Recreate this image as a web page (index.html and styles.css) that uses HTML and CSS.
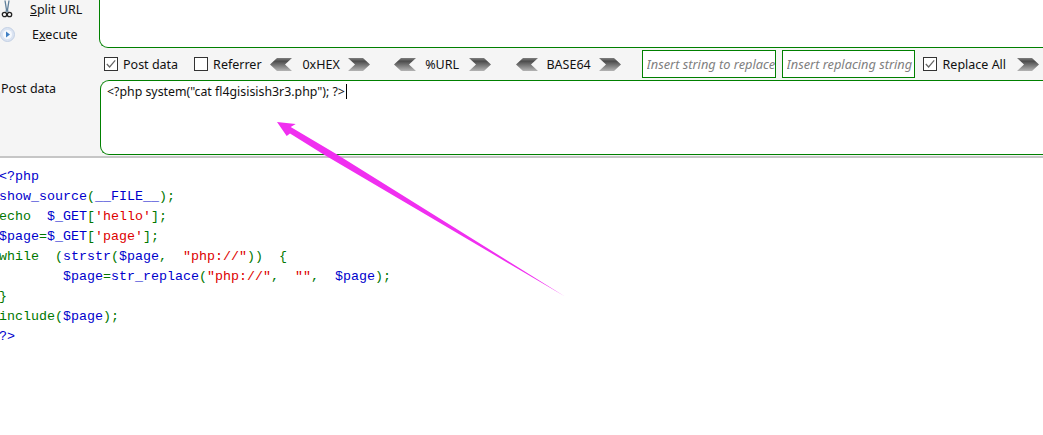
FILE: index.html
```html
<!DOCTYPE html>
<html lang="en">
<head>
<meta charset="utf-8">
<title>HackBar</title>
<link rel="stylesheet" href="styles.css">
</head>
<body>
<section class="panel">
  <aside class="side">
    <div class="cmd cmd-split">
      <svg class="ico" width="12" height="18" viewBox="0 0 12 18"><g fill="none"><path d="M4 .5 5.500 10 5 12M8 .5 6.500 10 7 12" stroke="#5f7f9a" stroke-width="1.300"/><circle cx="3.500" cy="14.500" r="2.200" stroke="#222" stroke-width="1.300"/><circle cx="8.500" cy="14.500" r="2.200" stroke="#222" stroke-width="1.300"/></g></svg>
      <span class="cmd-label"><u>S</u>plit URL</span>
    </div>
    <div class="cmd cmd-exec">
      <svg class="ico" width="15" height="15" viewBox="0 0 15 15"><circle cx="7.500" cy="7.500" r="7" fill="#dbe4f2" stroke="#c3d0e4"/><circle cx="7.500" cy="7.500" r="4.500" fill="#f6f9fd"/><path d="M6 4.500 10 7.500 6 10.500Z" fill="#3f7fc4"/></svg>
      <span class="cmd-label">E<u>x</u>ecute</span>
    </div>
    <div class="side-post">Post data</div>
  </aside>
  <div class="main">
    <div class="box box-url"></div>
    <div class="toolbar">
      <label class="check"><svg class="cb" width="14" height="14" viewBox="0 0 14 14"><rect x=".5" y=".5" width="13" height="13" fill="#fff" stroke="#333"/><path d="M2.800 7 5.600 10 11.200 3.400" fill="none" stroke="#666" stroke-width="1.200"/></svg>Post data</label>
      <label class="check check-ref"><svg class="cb" width="14" height="14" viewBox="0 0 14 14"><rect x=".5" y=".5" width="13" height="13" fill="#fff" stroke="#333"/></svg>Referrer</label>
      <svg class="arrow arrow-first" width="22" height="13" viewBox="0 0 22 13"><use href="#arr-l"/></svg>
      <span class="enc enc-hex">0xHEX</span>
      <svg class="arrow" width="22" height="13" viewBox="0 0 22 13"><use href="#arr-r"/></svg>
      <svg class="arrow arrow-gap" width="22" height="13" viewBox="0 0 22 13"><use href="#arr-l"/></svg>
      <span class="enc enc-url">%URL</span>
      <svg class="arrow" width="22" height="13" viewBox="0 0 22 13"><use href="#arr-r"/></svg>
      <svg class="arrow arrow-gap-wide" width="22" height="13" viewBox="0 0 22 13"><use href="#arr-l"/></svg>
      <span class="enc enc-b64">BASE64</span>
      <svg class="arrow" width="22" height="13" viewBox="0 0 22 13"><use href="#arr-r"/></svg>
      <input class="rep rep-a" type="text" placeholder="Insert string to replace">
      <input class="rep rep-b" type="text" placeholder="Insert replacing string">
      <label class="check check-all"><svg class="cb cb-all" width="14" height="14" viewBox="0 0 14 14"><rect x=".5" y=".5" width="13" height="13" fill="#fff" stroke="#333"/><path d="M2.800 7 5.600 10 11.200 3.400" fill="none" stroke="#666" stroke-width="1.200"/></svg>Replace All</label>
      <svg class="arrow arrow-last" width="22" height="13" viewBox="0 0 22 13"><use href="#arr-r"/></svg>
    </div>
    <div class="box box-post">&lt;?php system("cat fl4gisisish3r3.php"); ?&gt;<span class="caret"></span></div>
  </div>
</section>
<div class="code">
  <div class="line"><span class="d">&lt;?php</span></div>
  <div class="line"><span class="d">show_source</span><span class="k">(</span><span class="d">__FILE__</span><span class="k">);</span></div>
  <div class="line"><span class="k">echo  </span><span class="d">$_GET</span><span class="k">[</span><span class="s">'hello'</span><span class="k">];</span></div>
  <div class="line"><span class="d">$page</span><span class="k">=</span><span class="d">$_GET</span><span class="k">[</span><span class="s">'page'</span><span class="k">];</span></div>
  <div class="line"><span class="k">while  (</span><span class="d">strstr</span><span class="k">(</span><span class="d">$page</span><span class="k">,  </span><span class="s">"php://"</span><span class="k">))  {</span></div>
  <div class="line"><span class="k">        </span><span class="d">$page</span><span class="k">=</span><span class="d">str_replace</span><span class="k">(</span><span class="s">"php://"</span><span class="k">,  </span><span class="s">""</span><span class="k">,  </span><span class="d">$page</span><span class="k">);</span></div>
  <div class="line"><span class="k">}</span></div>
  <div class="line"><span class="k">include(</span><span class="d">$page</span><span class="k">);</span></div>
  <div class="line"><span class="d">?&gt;</span></div>
</div>
<svg class="annot" width="1043" height="435" viewBox="0 0 1043 435"><path d="M277 122 295.700 124 290.700 127 336.700 154.300 565 296.500 323.300 154.300 290 133.500 286.700 136Z" fill="#f02ff0"/></svg>
<svg class="defs" width="0" height="0">
  <defs>
    <linearGradient id="g" x1="0" y1="0" x2="0" y2="1"><stop offset="0" stop-color="#808080"/><stop offset=".25" stop-color="#4c4c4c"/><stop offset="1" stop-color="#b4b4b4"/></linearGradient>
    <path id="arr-l" d="M0 6.500 7 0H22L15 6.500 22 13H7Z" fill="url(#g)"/>
    <path id="arr-r" d="M22 6.500 15 0H0L7 6.500 0 13H15Z" fill="url(#g)"/>
  </defs>
</svg>
</body>
</html>
```
FILE: styles.css
```css
html, body { margin: 0; height: 100%; background: #fff; overflow: hidden; }
body { width: 1043px; height: 435px; position: relative; font-family: "Noto Sans", "Open Sans", sans-serif; font-size: 12.5px; color: #111; }

.panel { display: flex; height: 156px; background: #f5f5f5; border-bottom: 2px solid #c6c6c6; }
.side { width: 99px; flex: none; display: flex; flex-direction: column; }
.cmd { display: flex; align-items: center; }
.cmd-split { height: 18px; }
.cmd-exec { height: 25px; margin-top: 4px; }
.ico { flex: none; }
.cmd-split .ico { margin-left: 1px; }
.cmd-label { margin-left: 17px; }
.cmd-exec .cmd-label { margin-left: 17px; }
.side-post { margin: 33px 0 0 1px; }

.main { flex: 1; min-width: 0; display: flex; flex-direction: column; }
.box { background: #fff; border: 1px solid #008000; border-right: 0; margin-right: -4px; }
.box-url { height: 47px; border-top: 0; border-radius: 0 0 0 9px; }
.box-post { margin-left: 1px; border-radius: 9px 0 0 9px; padding: 3px 0 0 6px; height: 70px; line-height: 16px; font-size: 12.35px; }
.caret { display: inline-block; width: 1px; height: 15px; background: #000; vertical-align: -3px; margin-left: 1px; }

.toolbar { height: 32px; display: flex; align-items: center; white-space: nowrap; padding-left: 5px; }
.check { display: flex; align-items: center; }
.cb { margin-right: 5px; flex: none; }
.cb-all { margin-right: 6px; }
.check-ref { margin-left: 16px; }
.check-all { margin-left: 8px; }
.arrow { flex: none; }
.arrow-first { margin-left: 8px; }
.arrow-gap { margin-left: 24px; }
.arrow-gap-wide { margin-left: 25px; }
.arrow-last { margin-left: 11px; }
.enc { text-align: center; }
.enc-hex { width: 53px; padding-left: 3px; }
.enc-url { width: 53px; }
.enc-b64 { width: 60px; padding-left: 1px; }
.rep { height: 28px; box-sizing: border-box; margin: 0; padding: 0 0 0 4px; border: 1px solid #008000; background: #fff; font: italic 12.8px "Noto Sans", sans-serif; outline: 0; }
.rep-a { width: 134px; margin-left: 21px; }
.rep-b { width: 133px; margin-left: 6px; }
.rep::placeholder { color: #808080; opacity: 1; }

.code { margin: 9px 0 0 -1px; font: 13.33px/20px "Liberation Mono", monospace; }
.line { height: 20px; white-space: pre; }
.d { color: #0000cc; }
.k { color: #007700; }
.s { color: #dd0000; }

.annot { position: absolute; left: 0; top: 0; pointer-events: none; }
.defs { position: absolute; }
```
